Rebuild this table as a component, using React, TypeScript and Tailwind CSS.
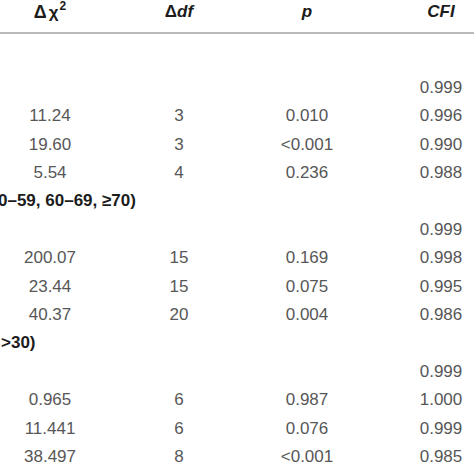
const font = { fontFamily: '"Liberation Sans", Arial, sans-serif' };

type Row =
  | { kind: 'heading'; text: string; shift?: string }
  | { kind: 'data'; chi?: string; df?: string; p?: string; cfi: string };

const rows: Row[] = [
  { kind: 'heading', text: '' },
  { kind: 'data', cfi: '0.999' },
  { kind: 'data', chi: '11.24', df: '3', p: '0.010', cfi: '0.996' },
  { kind: 'data', chi: '19.60', df: '3', p: '<0.001', cfi: '0.990' },
  { kind: 'data', chi: '5.54', df: '4', p: '0.236', cfi: '0.988' },
  { kind: 'heading', text: '0–59, 60–69, ≥70)', shift: 'ml-[-2px]' },
  { kind: 'data', cfi: '0.999' },
  { kind: 'data', chi: '200.07', df: '15', p: '0.169', cfi: '0.998' },
  { kind: 'data', chi: '23.44', df: '15', p: '0.075', cfi: '0.995' },
  { kind: 'data', chi: '40.37', df: '20', p: '0.004', cfi: '0.986' },
  { kind: 'heading', text: '>30)', shift: 'ml-[1px]' },
  { kind: 'data', cfi: '0.999' },
  { kind: 'data', chi: '0.965', df: '6', p: '0.987', cfi: '1.000' },
  { kind: 'data', chi: '11.441', df: '6', p: '0.076', cfi: '0.999' },
  { kind: 'data', chi: '38.497', df: '8', p: '<0.001', cfi: '0.985' },
];

const cols = 'grid grid-cols-[100px_158px_98px_52px_66px]';

export default function App() {
  return (
    <div className="w-[474px] h-[474px] overflow-hidden bg-white text-[17px]" style={font}>
      <div className={`${cols} h-[34px] border-b-2 border-[#b9b9b9] font-bold text-[#1c1c1c] leading-[24px]`}>
        <div className="text-center">
          <span className="text-[18px]">Δ</span>
          <span className="ml-[2px]">χ</span>
          <span className="text-[12px] relative top-[-8px] ml-[1px]">2</span>
        </div>
        <div className="text-center">
          Δ<i>df</i>
        </div>
        <div className="text-center">
          <i>p</i>
        </div>
        <div />
        <div className="text-center">
          <i>CFI</i>
        </div>
      </div>

      <div className="pt-[11px]">
        {rows.map((r, i) =>
          r.kind === 'heading' ? (
            <div key={i} className="h-[28.4px] flex items-center font-bold text-[#1c1c1c] whitespace-nowrap">
              <span className={r.shift}>{r.text}</span>
            </div>
          ) : (
            <div key={i} className={`${cols} h-[28.4px] items-center text-[#575757]`}>
              <div className="text-center">{r.chi}</div>
              <div className="text-center">{r.df}</div>
              <div className="text-center">{r.p}</div>
              <div />
              <div className="text-center">{r.cfi}</div>
            </div>
          )
        )}
      </div>
    </div>
  );
}
